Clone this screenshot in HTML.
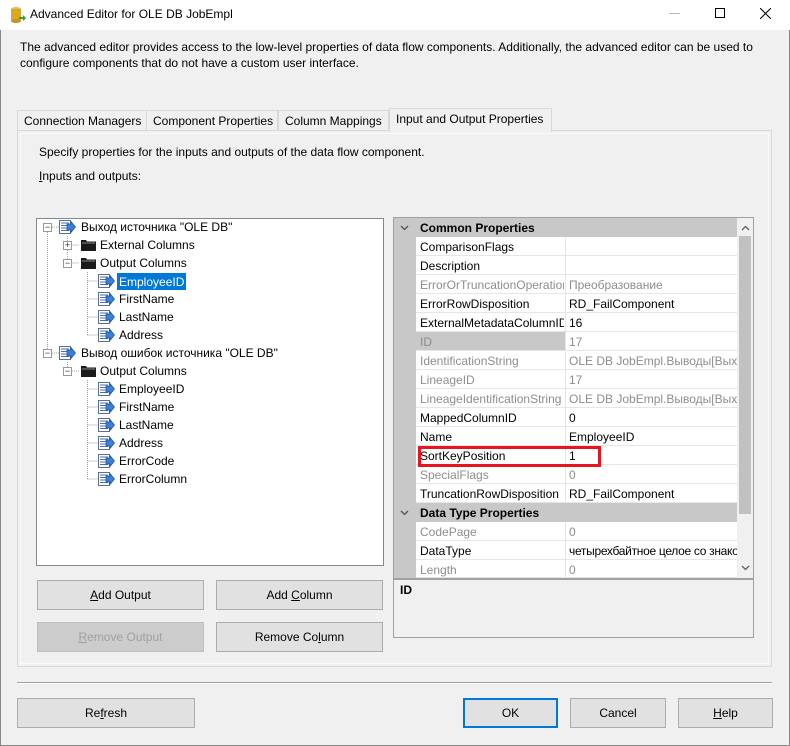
<!DOCTYPE html>
<html><head><meta charset="utf-8"><style>
*{box-sizing:border-box;margin:0;padding:0}
body{width:790px;height:746px;background:#f0f0f0;font-family:"Segoe UI","Liberation Sans","DejaVu Sans",sans-serif;font-size:12px;color:#000;position:relative;overflow:hidden}
.a{position:absolute;white-space:nowrap}
.btn{position:absolute;background:#e1e1e1;border:1px solid #adadad;text-align:center;line-height:29px;font-size:12px}
.btn.dis{background:#cccccc;border-color:#bfbfbf;color:#a0a0a0}
.tr{position:absolute;height:18px;line-height:19px;white-space:nowrap}
.pr{position:absolute;left:416px;width:321px;height:19px;border-bottom:1px solid #e6e6e6;line-height:20px;background:#fff;white-space:nowrap}
.pr .n{position:absolute;left:4px;top:0;width:144px;overflow:hidden}
.pr .v{position:absolute;left:149px;top:0;width:172px;height:18px;border-left:1px solid #e6e6e6;padding-left:3px;overflow:hidden}
.g{color:#8d8d8d}
.ph{position:absolute;left:394px;width:343px;height:19px;background:#c8c8c8;font-weight:bold;line-height:20px;padding-left:26px}
.ex{position:absolute;width:9px;height:9px;border:1px solid #999;background:#fff;font-size:9px;line-height:6px;text-align:center;color:#333}
</style></head><body>
<!-- title bar -->
<div class="a" style="left:0;top:0;width:790px;height:30px;background:#fff"></div>
<svg class="a" style="left:10px;top:6px" width="16" height="18"><ellipse cx="6" cy="3" rx="5" ry="2" fill="#e8c04a"/><rect x="1" y="3" width="10" height="12" fill="#d9a827"/><ellipse cx="6" cy="15" rx="5" ry="2" fill="#c9941c"/><path d="M9 11h4v-2l3 3-3 3v-2h-4z" fill="#3a9a3a"/></svg>
<div class="a" style="left:30px;top:7px;font-size:12px">Advanced Editor for OLE DB JobEmpl</div>
<div class="a" style="left:669px;top:13px;width:11px;height:1px;background:#bbb"></div>
<div class="a" style="left:715px;top:8px;width:10px;height:10px;border:1px solid #000"></div>
<svg class="a" style="left:760px;top:8px" width="11" height="11"><path d="M0 0L11 11M11 0L0 11" stroke="#000" stroke-width="1"/></svg>
<div class="a" style="left:0;top:30px;width:1px;height:716px;background:#888"></div>
<div class="a" style="left:789px;top:30px;width:1px;height:716px;background:#888"></div>
<div class="a" style="left:0;top:745px;width:790px;height:1px;background:#888"></div>

<div class="a" style="left:20px;top:39px;line-height:16px">The advanced editor provides access to the low-level properties of data flow components. Additionally, the advanced editor can be used to<br>configure components that do not have a custom user interface.</div>

<!-- tabs -->
<div class="a" style="left:17px;top:110px;width:130px;height:21px;border:1px solid #d9d9d9;background:#f0f0f0;line-height:21px;padding-left:6px">Connection Managers</div>
<div class="a" style="left:146px;top:110px;width:132px;height:21px;border:1px solid #d9d9d9;background:#f0f0f0;line-height:21px;padding-left:6px">Component Properties</div>
<div class="a" style="left:278px;top:110px;width:111px;height:21px;border:1px solid #d9d9d9;background:#f0f0f0;line-height:21px;padding-left:6px">Column Mappings</div>
<div class="a" style="left:17px;top:130px;width:755px;height:537px;border:1px solid #d9d9d9;background:#f0f0f0"></div>
<div class="a" style="left:20px;top:133px;width:749px;height:531px;border:1px solid #fafafa"></div>
<div class="a" style="left:389px;top:108px;width:163px;height:24px;border:1px solid #d9d9d9;border-bottom:none;background:#f0f0f0;line-height:21px;padding-left:6px">Input and Output Properties</div>

<div class="a" style="left:39px;top:145px">Specify properties for the inputs and outputs of the data flow component.</div>
<div class="a" style="left:39px;top:169px"><u>I</u>nputs and outputs:</div>

<!-- tree -->
<div class="a" style="left:36px;top:218px;width:348px;height:348px;border:1px solid #828790;background:#fff"></div>
<svg class="a" style="left:36px;top:218px" width="348" height="348" fill="none" stroke="#a0a0a0" stroke-dasharray="1 1">
<path d="M11.5 14V135M16 9H23M31.5 18V45M31.5 27H43M31.5 45H43M51.5 54V117M51.5 63H62M51.5 81H62M51.5 99H62M51.5 117H62M16 135H23M31.5 144V153M51.5 162V261M51.5 171H62M51.5 189H62M51.5 207H62M51.5 225H62M51.5 243H62M51.5 261H62M36 153H43"/>
</svg>
<div class="ex" style="left:43px;top:223px">−</div>
<div class="ex" style="left:63px;top:241px">+</div>
<div class="ex" style="left:63px;top:259px">−</div>
<div class="ex" style="left:43px;top:349px">−</div>
<div class="ex" style="left:63px;top:367px">−</div>

<svg width="0" height="0" style="position:absolute"><defs>
<symbol id="ci" viewBox="0 0 17 14"><rect x="0.5" y="0.5" width="11" height="13" fill="#fff" stroke="#5a6f99"/><path d="M2 3h8M2 5.5h8M2 8h8M2 10.5h8" stroke="#4a6fb5"/><path d="M8 4h4V1.5L16.5 7 12 12.5V10H8z" fill="#3b7fd6" stroke="#1d4f9a" stroke-width=".7"/></symbol>
<symbol id="fo" viewBox="0 0 17 14"><path d="M1 2h5l1 1.5h9V13H1z" fill="#1a1a1a"/><rect x="2" y="4.5" width="13" height="1" fill="#888"/></symbol>
</defs></svg>

<svg class="a" style="left:59px;top:220px" width="17" height="14"><use href="#ci"/></svg><div class="tr" style="left:81px;top:218px">Выход источника "OLE DB"</div>
<svg class="a" style="left:80px;top:238px" width="17" height="14"><use href="#fo"/></svg><div class="tr" style="left:100px;top:236px">External Columns</div>
<svg class="a" style="left:80px;top:256px" width="17" height="14"><use href="#fo"/></svg><div class="tr" style="left:100px;top:254px">Output Columns</div>
<svg class="a" style="left:98px;top:274px" width="17" height="14"><use href="#ci"/></svg><div class="tr" style="left:117px;top:273px;height:17px;line-height:18px;background:#0078d7;color:#fff;padding:0 2px">EmployeeID</div>
<svg class="a" style="left:98px;top:292px" width="17" height="14"><use href="#ci"/></svg><div class="tr" style="left:119px;top:290px">FirstName</div>
<svg class="a" style="left:98px;top:310px" width="17" height="14"><use href="#ci"/></svg><div class="tr" style="left:119px;top:308px">LastName</div>
<svg class="a" style="left:98px;top:328px" width="17" height="14"><use href="#ci"/></svg><div class="tr" style="left:119px;top:326px">Address</div>
<svg class="a" style="left:59px;top:346px" width="17" height="14"><use href="#ci"/></svg><div class="tr" style="left:81px;top:344px">Вывод ошибок источника "OLE DB"</div>
<svg class="a" style="left:80px;top:364px" width="17" height="14"><use href="#fo"/></svg><div class="tr" style="left:100px;top:362px">Output Columns</div>
<svg class="a" style="left:98px;top:382px" width="17" height="14"><use href="#ci"/></svg><div class="tr" style="left:119px;top:380px">EmployeeID</div>
<svg class="a" style="left:98px;top:400px" width="17" height="14"><use href="#ci"/></svg><div class="tr" style="left:119px;top:398px">FirstName</div>
<svg class="a" style="left:98px;top:418px" width="17" height="14"><use href="#ci"/></svg><div class="tr" style="left:119px;top:416px">LastName</div>
<svg class="a" style="left:98px;top:436px" width="17" height="14"><use href="#ci"/></svg><div class="tr" style="left:119px;top:434px">Address</div>
<svg class="a" style="left:98px;top:454px" width="17" height="14"><use href="#ci"/></svg><div class="tr" style="left:119px;top:452px">ErrorCode</div>
<svg class="a" style="left:98px;top:472px" width="17" height="14"><use href="#ci"/></svg><div class="tr" style="left:119px;top:470px">ErrorColumn</div>

<!-- property grid -->
<div class="a" style="left:393px;top:217px;width:361px;height:362px;border:1px solid #a0a0a0;background:#c8c8c8"></div>
<div class="a" style="left:737px;top:218px;width:16px;height:360px;background:#f0f0f0"></div>
<div class="a" style="left:739px;top:236px;width:12px;height:278px;background:#c1c1c1"></div>
<svg class="a" style="left:741px;top:225px" width="9" height="6"><path d="M1 5L4.5 1.5 8 5" stroke="#606060" fill="none" stroke-width="1.3"/></svg>
<svg class="a" style="left:741px;top:565px" width="9" height="6"><path d="M1 1L4.5 4.5 8 1" stroke="#606060" fill="none" stroke-width="1.3"/></svg>

<div class="ph" style="top:218px">Common Properties</div>
<svg class="a" style="left:400px;top:225px" width="9" height="6"><path d="M1 1L4.5 4.5 8 1" stroke="#505050" fill="none" stroke-width="1.3"/></svg>
<div class="pr" style="top:237px"><div class="n">ComparisonFlags</div><div class="v"></div></div>
<div class="pr" style="top:256px"><div class="n">Description</div><div class="v"></div></div>
<div class="pr g" style="top:275px"><div class="n">ErrorOrTruncationOperation</div><div class="v">Преобразование</div></div>
<div class="pr" style="top:294px"><div class="n">ErrorRowDisposition</div><div class="v">RD_FailComponent</div></div>
<div class="pr" style="top:313px"><div class="n">ExternalMetadataColumnID</div><div class="v">16</div></div>
<div class="pr g" style="top:332px;background:linear-gradient(90deg,#c8c8c8 149px,#fff 149px)"><div class="n">ID</div><div class="v">17</div></div>
<div class="pr g" style="top:351px"><div class="n">IdentificationString</div><div class="v">OLE DB JobEmpl.Выводы[Выход</div></div>
<div class="pr g" style="top:370px"><div class="n">LineageID</div><div class="v">17</div></div>
<div class="pr g" style="top:389px"><div class="n">LineageIdentificationString</div><div class="v">OLE DB JobEmpl.Выводы[Выход</div></div>
<div class="pr" style="top:408px"><div class="n">MappedColumnID</div><div class="v">0</div></div>
<div class="pr" style="top:427px"><div class="n">Name</div><div class="v">EmployeeID</div></div>
<div class="pr" style="top:446px"><div class="n">SortKeyPosition</div><div class="v">1</div></div>
<div class="pr g" style="top:465px"><div class="n">SpecialFlags</div><div class="v">0</div></div>
<div class="pr" style="top:484px"><div class="n">TruncationRowDisposition</div><div class="v">RD_FailComponent</div></div>
<div class="ph" style="top:503px">Data Type Properties</div>
<svg class="a" style="left:400px;top:510px" width="9" height="6"><path d="M1 1L4.5 4.5 8 1" stroke="#505050" fill="none" stroke-width="1.3"/></svg>
<div class="pr g" style="top:522px"><div class="n">CodePage</div><div class="v">0</div></div>
<div class="pr" style="top:541px"><div class="n">DataType</div><div class="v" style="letter-spacing:-0.3px">четырехбайтное целое со знаком</div></div>
<div class="pr g" style="top:560px;height:18px"><div class="n">Length</div><div class="v">0</div></div>
<div class="a" style="left:418px;top:446px;width:183px;height:21px;border:3px solid #e8141e"></div>

<div class="a" style="left:393px;top:579px;width:361px;height:59px;border:1px solid #a0a0a0;background:#f0f0f0"></div>
<div class="a" style="left:400px;top:583px;font-weight:bold">ID</div>

<!-- buttons -->
<div class="btn" style="left:37px;top:580px;width:167px;height:30px"><u>A</u>dd Output</div>
<div class="btn" style="left:216px;top:580px;width:167px;height:30px">Add <u>C</u>olumn</div>
<div class="btn dis" style="left:37px;top:622px;width:167px;height:30px"><u>R</u>emove Output</div>
<div class="btn" style="left:216px;top:622px;width:167px;height:30px">Remove Co<u>l</u>umn</div>

<div class="a" style="left:17px;top:682px;width:755px;height:1px;background:#a0a0a0"></div>
<div class="a" style="left:17px;top:683px;width:755px;height:1px;background:#fff"></div>

<div class="btn" style="left:17px;top:698px;width:178px;height:30px">Re<u>f</u>resh</div>
<div class="btn" style="left:463px;top:698px;width:95px;height:30px;border:2px solid #0078d7;line-height:27px">OK</div>
<div class="btn" style="left:570px;top:698px;width:96px;height:30px">Cancel</div>
<div class="btn" style="left:678px;top:698px;width:95px;height:30px"><u>H</u>elp</div>
</body></html>
